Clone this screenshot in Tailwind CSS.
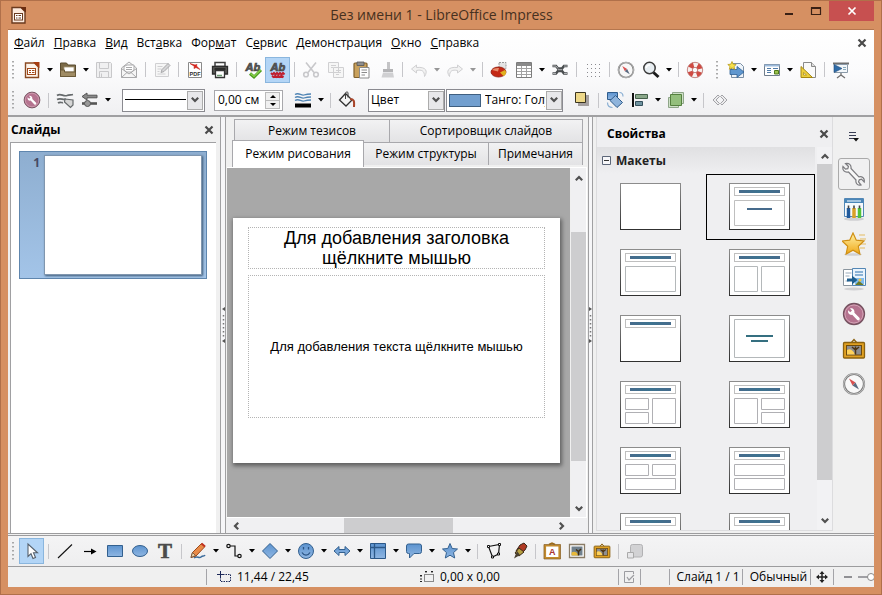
<!DOCTYPE html>
<html lang="ru">
<head>
<meta charset="utf-8">
<title>Без имени 1 - LibreOffice Impress</title>
<script src="https://cdn.jsdelivr.net/npm/@tailwindcss/browser@4"></script>
</head>
<body class="flex h-screen flex-col overflow-hidden border border-[#b0704a] bg-[#d69062] px-[7px] pb-[7px] font-['Open_Sans','Noto_Sans',sans-serif] text-[12px] leading-4 text-black">

<svg class="absolute size-0" aria-hidden="true">
  <defs>
    <linearGradient id="blue" x1="0" y1="0" x2="0" y2="1"><stop offset="0" stop-color="#5c93cf"/><stop offset="1" stop-color="#8fb6e2"/></linearGradient>
    <linearGradient id="gold" x1="0" y1="0" x2="0" y2="1"><stop offset="0" stop-color="#fff2a8"/><stop offset="1" stop-color="#f0a818"/></linearGradient>
    <linearGradient id="edge" x1="0" y1="0" x2="0" y2="1"><stop offset="0" stop-color="#8c8c8c"/><stop offset="1" stop-color="#303030"/></linearGradient>
    <linearGradient id="bar" x1="0" y1="0" x2="1" y2="0"><stop offset="0" stop-color="#466b8c"/><stop offset=".5" stop-color="#3d7390"/><stop offset="1" stop-color="#466b8c"/></linearGradient>
    <symbol id="x" viewBox="0 0 10 10"><path d="M1.500 1.500l7 7M8.500 1.500l-7 7" stroke="#4a4a4a" stroke-width="2.200"/></symbol>
    <symbol id="chev" viewBox="0 0 10 10"><path d="M1.800 2.800L5 6l3.200-3.200" fill="none" stroke="#505050" stroke-width="2.200"/></symbol>
    <symbol id="dd" viewBox="0 0 11 24"><path d="M3 10h6L6 13.500z"/></symbol>
    <symbol id="grip" viewBox="0 0 11 24"><path d="M5 3v19" stroke="#909090" stroke-width="1.500" stroke-dasharray="1.500 2.500"/></symbol>
    <symbol id="wrenchball" viewBox="0 0 24 24"><circle cx="12" cy="12" r="10.500" fill="#b5738f" stroke="#74515f" stroke-width="1.300"/><circle cx="12" cy="12" r="9" fill="none" stroke="#d3a3b5" stroke-width="1"/><path d="M8 6.500l2 2-1.800 1.800-2-2c-.7 3 1.300 5 4 4.500l5 5.200c1.500 1.300 3.500-.6 2.200-2.200l-5-5c.6-3-1.800-5-4.400-4.300z" fill="#fff"/></symbol>
    <symbol id="compass" viewBox="0 0 24 24"><circle cx="12" cy="12" r="10" fill="#f8f8f8" stroke="#7c7c7c" stroke-width="2.200"/><circle cx="12" cy="12" r="10.300" fill="none" stroke="#d5d5d5" stroke-width=".8"/><path d="M7 6.500l6.500 4-3 3z" fill="#d85050"/><path d="M17 17.500l-6.500-4 3-3z" fill="#5a6a80"/></symbol>
    <symbol id="gallery" viewBox="0 0 24 24"><path d="M9 6l3-3.500L15 6" fill="none" stroke="#8b6210" stroke-width="1.300"/><rect x="1.500" y="5.500" width="21" height="15.500" rx="1" fill="#e0a021" stroke="#8b6210" stroke-width="1.300"/><rect x="4.500" y="8.500" width="15" height="9.500" fill="#8e8e90" stroke="#6e4b0c"/><path d="M5 17.500v-4.500c3-2 6 0 8 4.500z" fill="#ffd25a"/><path d="M13.500 17.500v-4.500l-3.500-3M13.500 13l3.500-3M13.500 12V9.500" stroke="#4f3512" stroke-width="1.500" fill="none"/></symbol>
    <symbol id="frame" viewBox="0 0 61 47"><rect x=".5" y=".5" width="60" height="46" fill="#fff" stroke="url(#edge)"/></symbol>
    <symbol id="titled" viewBox="0 0 61 47"><rect x=".5" y=".5" width="60" height="46" fill="#fff" stroke="url(#edge)"/><rect x="5.500" y="4.500" width="50" height="8" fill="#fff" stroke="#bfbfbf"/><rect x="10" y="7" width="41" height="3" fill="url(#bar)"/></symbol>
  </defs>
</svg>

<header class="flex h-7 shrink-0 items-start">
  <svg class="mt-[5px] ml-[2px] size-[18px]" viewBox="0 0 18 18"><path d="M2 1.500h9l4 4v11.500H2z" fill="#fbe9dc" stroke="#6b3a1e" stroke-width="1.400"/><path d="M10 1l6 0v5.500z" fill="#6b2d10"/><rect x="4.500" y="7.500" width="8" height="6.500" fill="#fff" stroke="#6b3a1e"/><path d="M6 9.500h1.500M8.500 9.500H11M6 12h1.500M8.500 12H11" stroke="#6b3a1e"/></svg>
  <h1 class="flex-1 pt-1 pl-[80px] text-center text-[14px] leading-5 text-[#47301f]">Без имени 1 - LibreOffice Impress</h1>
  <button aria-label="Свернуть" class="grid h-5 w-[27px] place-items-center"><svg class="size-3" viewBox="0 0 12 12"><path d="M2 9h8" stroke="#3a2014" stroke-width="2"/></svg></button>
  <button aria-label="Развернуть" class="grid h-5 w-[27px] place-items-center"><svg class="size-3" viewBox="0 0 12 12"><path d="M1.500 3h9v6.500h-9z" fill="none" stroke="#3a2014" stroke-width="1.200"/><path d="M1 3h10" stroke="#3a2014" stroke-width="2"/></svg></button>
  <button aria-label="Закрыть" class="grid h-5 w-[45px] place-items-center bg-[#c75050]"><svg class="size-[10px]" viewBox="0 0 10 10"><path d="M1.500 1.500l7 7M8.500 1.500l-7 7" stroke="#fff" stroke-width="1.700"/></svg></button>
</header>

<div class="flex min-h-0 flex-1 flex-col border-t border-[#b5764e] bg-[#f0f0f0]">
  <div class="shrink-0 border-b-2 border-[#a0a0a2] bg-linear-to-b from-white via-[#fbfbfc] to-[#f0f0f2]">
    <nav class="flex h-6 items-center gap-[9px] pt-px pl-[6px]">
      <a href="#"><u>Ф</u>айл</a><a href="#"><u>П</u>равка</a><a href="#"><u>В</u>ид</a><a href="#">Вст<u>а</u>вка</a><a href="#">Фор<u>м</u>ат</a><a href="#">С<u>е</u>рвис</a><a href="#"><u>Д</u>емонстрация</a><a href="#"><u>О</u>кно</a><a href="#"><u>С</u>правка</a>
      <button aria-label="Закрыть документ" class="mr-[7px] ml-auto"><svg class="size-[10px]"><use href="#x"/></svg></button>
    </nav>

    <div role="toolbar" aria-label="Стандартная" class="flex h-[31px] items-center [&>*]:shrink-0 [&>.dd]:w-[11px] [&>.grip]:w-[11px] [&>button]:grid [&>button]:h-[26px] [&>button]:w-[25px] [&>button]:place-items-center [&>hr]:mr-[3px] [&>hr]:ml-1 [&>hr]:h-[15px] [&>hr]:w-px [&>hr]:border-0 [&>hr]:bg-[#c6c6ca] [&_svg]:h-6 [&>button:not(.dd)>svg]:w-6">
      <svg class="grip"><use href="#grip"/></svg>
      <button aria-label="Создать"><svg viewBox="0 0 24 24"><path d="M5.500 5h9l4 4v10.500h-13z" fill="#fdf3ea" stroke="#8a4a22" stroke-width="1.400"/><path d="M13 4h6.500v6z" fill="#a83c10"/><rect x="7.500" y="10.500" width="8" height="6" fill="#fff" stroke="#a34a1a"/><path d="M9 12.500h2M12 12.500h2.500M9 14.500h2M12 14.500h2.500" stroke="#a34a1a"/></svg></button>
      <button class="dd" aria-label="Создать: варианты"><svg class="w-[11px]"><use href="#dd"/></svg></button>
      <button aria-label="Открыть"><svg viewBox="0 0 24 24"><path d="M4.500 5h6l1.500 2h7.500v11.500h-15z" fill="#7b6a48" stroke="#5a4c30"/><rect x="8" y="9" width="10" height="5" fill="#fff" stroke="#a59878" stroke-width=".8"/><path d="M4.500 12h4v2h11v4.500h-15z" fill="#a08c64" stroke="#6b5a38"/></svg></button>
      <button class="dd" aria-label="Открыть: варианты"><svg class="w-[11px]"><use href="#dd"/></svg></button>
      <button aria-label="Сохранить"><svg viewBox="0 0 24 24" fill="none" stroke="#c8c8ca"><path d="M4.500 4.500h14l1 1v14h-15z" fill="#f0f0f1"/><path d="M7.500 4.500v6h9v-6M7.500 19v-5.500h9V19M9.500 15.500v3.500"/></svg></button>
      <button aria-label="Отправить"><svg viewBox="0 0 24 24" fill="#f6f6f6" stroke="#a9a9ab"><path d="M4.500 10L12 4l7.500 6v9.500h-15z"/><path d="M7 12V8.500L10 7h7v5l-5 4z" fill="#fff"/><path d="M4.500 19.500l6-5.500h3l6 5.500M4.500 10.500l6 4.500M19.500 10.500l-6 4.500M9 9.500h6M9 11.500h6" fill="none"/></svg></button>
      <hr>
      <button aria-label="Правка"><svg viewBox="0 0 24 24" fill="none" stroke="#d0d0d2"><path d="M5.500 5.500h13v13h-13z" fill="#f6f6f6"/><path d="M7.500 8.500h5M7.500 11h4M7.500 13.500h2M7.500 16h8"/><path d="M11 14.500l1-3 6-6 2 2-6 6z" fill="#d5d5d7" stroke="#a8a8aa"/></svg></button>
      <hr>
      <button aria-label="Экспорт в PDF"><svg viewBox="0 0 24 24"><path d="M5.500 4.500h13v15h-13z" fill="#fff" stroke="#8a8a8a"/><path d="M7 5.500l5 1.500 2-.5-.5 1.500 3.500 3.500-4-2-2 1 .3-2.200z" fill="#e02018" stroke="#c02018" stroke-width=".6"/><text x="12" y="18" text-anchor="middle" font-family="Liberation Sans" font-size="5.500" font-weight="700" fill="#303030">PDF</text></svg></button>
      <button aria-label="Печать"><svg viewBox="0 0 24 24"><path d="M7 4.500h10v4H7z" fill="#fff" stroke="#404040" stroke-width="1.500"/><path d="M4.500 8.500h15V16h-15z" fill="#5b5b58" stroke="#2d2d2d" stroke-width="1.300"/><path d="M6.500 11h11" stroke="#1c1c1c" stroke-width="1.500"/><path d="M7.500 12.500h9v7h-9z" fill="#fff" stroke="#333" stroke-width="1.300"/><path d="M9 17.500h5" stroke="#6a9a70" stroke-width="1.500"/></svg></button>
      <hr>
      <button aria-label="Орфография"><svg viewBox="0 0 24 24"><text x="4.500" y="12.500" font-family="Liberation Sans" font-size="11" font-weight="700" font-style="italic" fill="#606060" stroke="#404040" stroke-width=".7">Ab</text><path d="M9 15.500l4 3.500L20 12" fill="none" stroke="#4b9a1e" stroke-width="3"/><path d="M9.500 15.500l3.500 3 6.500-6.500" fill="none" stroke="#8ad24c" stroke-width="1.200"/></svg></button>
      <button aria-label="Автопроверка орфографии" aria-pressed="true" class="border border-[#8ab6de] bg-[#b3d5f6]"><svg viewBox="0 0 24 24"><text x="4.500" y="12.500" font-family="Liberation Sans" font-size="11" font-weight="700" font-style="italic" fill="#606060" stroke="#404040" stroke-width=".7">Ab</text><path d="M5 15l1.500 1.500L8 15l1.500 1.500L11 15l1.500 1.500L14 15l1.500 1.500L17 15l1.500 1.500M6 18l1.500 1L9 18l1.500 1L12 18l1.500 1L15 18l1.500 1 1-1" fill="none" stroke="#c02030" stroke-width="2"/></svg></button>
      <hr>
      <button aria-label="Вырезать"><svg viewBox="0 0 24 24" fill="none" stroke="#c8c8cb" stroke-width="1.600"><path d="M7 4.500l8 10M17 4.500l-8 10"/><circle cx="7" cy="16.500" r="2.300"/><circle cx="17" cy="16.500" r="2.300"/></svg></button>
      <button aria-label="Копировать"><svg viewBox="0 0 24 24" fill="#f6f6f6" stroke="#d0d0d2"><path d="M4.500 4.500h10v10h-10zM9.500 9.500h10v10h-10z"/><path d="M7 7.500h5M7 9.500h2M12 12.500h5M12 14.500h5M12 16.500h3"/></svg></button>
      <button aria-label="Вставить"><svg viewBox="0 0 24 24"><rect x="5" y="5" width="13" height="14.500" rx="1" fill="#c9a15c" stroke="#80602c" stroke-width="1.200"/><path d="M8 4h7v3.500H8z" fill="#8e8e8e" stroke="#555" stroke-width=".8"/><path d="M10.500 9.500h9.500v10.500h-9.500z" fill="#fdfdfd" stroke="#8a8a8a"/><path d="M12.500 12h5.500M12.500 14.500h5.500M12.500 17h3.500" stroke="#8a8a8a"/></svg></button>
      <button aria-label="Копировать формат"><svg viewBox="0 0 24 24"><path d="M13 4h3v7h-3z" fill="#c4c4c6"/><path d="M9 11h10v3H9z" fill="#b4b4b6"/><path d="M9 14.500h10l1 5H7.500z" fill="#d0d0d2"/></svg></button>
      <hr>
      <button aria-label="Отменить"><svg viewBox="0 0 24 24"><path d="M9.500 7l-5 4 5 4v-2.500c5-1 8 0 8 6 3.500-5 2-10-8-9z" fill="#f2f2f2" stroke="#d0d0d2"/></svg></button>
      <button class="dd opacity-40" aria-label="Отменить: список"><svg class="w-[11px]"><use href="#dd"/></svg></button>
      <button aria-label="Вернуть"><svg viewBox="0 0 24 24"><path d="M14.500 7l5 4-5 4v-2.500c-5-1-8 0-8 6-3.500-5-2-10 8-9z" fill="#f2f2f2" stroke="#d0d0d2"/></svg></button>
      <button class="dd opacity-40" aria-label="Вернуть: список"><svg class="w-[11px]"><use href="#dd"/></svg></button>
      <hr>
      <button aria-label="Диаграмма"><svg viewBox="0 0 24 24"><path d="M12 4.500h7v6l-2 1.500-5-2z" fill="#e4e4e4" stroke="#9a9a9a" stroke-dasharray="2 1"/><ellipse cx="11.500" cy="14" rx="7.500" ry="5" fill="#c42814" stroke="#8c1a0c" stroke-width=".8"/><path d="M5 12a7 4 0 0 1 7-2l-1 3.500z" fill="#e88a6a"/><path d="M13 14.500l5-2.500c2 2 1 5-1.500 6z" fill="#e0b020"/></svg></button>
      <button aria-label="Таблица"><svg viewBox="0 0 24 24"><path d="M4.500 4.500h15v15h-15z" fill="#fff" stroke="#7c7c7c"/><path d="M5 5h14v3H5z" fill="#8a8a8a"/><path d="M5 10.500h14M5 13.500h14M5 16.500h14M9.500 8v11M14.500 8v11" stroke="#a2a2a2"/></svg></button>
      <button class="dd" aria-label="Таблица: размер"><svg class="w-[11px]"><use href="#dd"/></svg></button>
      <button aria-label="Гиперссылка"><svg viewBox="0 0 24 24" fill="none"><path d="M4.500 8H8l2 2.500h4L16 8h3.500M4.500 15.500H8l2-2.500h4l2 2.500h3.500" stroke="#4a4e50" stroke-width="2.600"/><path d="M5 8h3l2 2.500M16 8h3M10 11.700h4M5 15.500h3M16 15.500h3" stroke="#b0b2b4"/></svg></button>
      <hr>
      <button aria-label="Сетка"><svg viewBox="0 0 24 24"><path d="M6 6.500h14M6 10.500h14M6 14.500h14M6 18.500h14" stroke="#8b8b90" stroke-dasharray="1 3"/></svg></button>
      <hr>
      <button aria-label="Навигатор"><svg class="p-[3px]"><use href="#compass"/></svg></button>
      <button aria-label="Масштаб"><svg viewBox="0 0 24 24"><circle cx="10.500" cy="10" r="5.700" fill="#e8eef2" stroke="#3c3c3c" stroke-width="1.500"/><path d="M7 10a4 4 0 0 1 4-3" stroke="#fff" fill="none" stroke-width="1.500"/><path d="M14.500 14.500l5 4.500" stroke="#1c1c1c" stroke-width="3"/></svg></button>
      <button class="dd" aria-label="Масштаб: варианты"><svg class="w-[11px]"><use href="#dd"/></svg></button>
      <hr>
      <button aria-label="Справка"><svg viewBox="0 0 24 24"><circle cx="12" cy="12" r="5.200" fill="none" stroke="#f6f1f0" stroke-width="5"/><circle cx="12" cy="12" r="5.200" fill="none" stroke="#d04a42" stroke-width="5" stroke-dasharray="4.080 4.090" stroke-dashoffset="-2"/><circle cx="12" cy="12" r="7.700" fill="none" stroke="#b86a66" stroke-width=".8"/><circle cx="12" cy="12" r="2.700" fill="none" stroke="#b86a66" stroke-width=".8"/></svg></button>
      <svg class="w-4" viewBox="0 0 16 24"><path d="M10 3v19" stroke="#909090" stroke-width="1.500" stroke-dasharray="1.500 2.500"/></svg>
      <button aria-label="Создать слайд"><svg viewBox="0 0 24 24"><path d="M7.500 5.500h9l3 3v11h-12z" fill="#eef4fa" stroke="#7b8fa4"/><path d="M6 11.500h7V8.500l7 5.500-7 5.500v-3H6z" fill="#5f97cf" stroke="#2f5f93" stroke-width=".8"/><path d="M8 3.500l1.200 2.700 3 .3-2.200 2 .7 2.800L8 9.900l-2.700 1.400.7-2.800-2.200-2 3-.3z" fill="#f7e14a" stroke="#b79a1a" stroke-width=".8"/></svg></button>
      <button class="dd" aria-label="Создать слайд: варианты"><svg class="w-[11px]"><use href="#dd"/></svg></button>
      <button aria-label="Разметка слайда"><svg viewBox="0 0 24 24"><path d="M4.500 6.500h15v11h-15z" fill="#fff" stroke="#6f7d8b"/><path d="M4.500 6.500h15v2h-15z" fill="#9cbbdc"/><path d="M7 10.500h4M7 12.500h4M7 14.500h4M13 10.500h5" stroke="#4f7ba8"/><path d="M14.500 12.500h4v3.500h-4z" fill="#9cc24e" stroke="#4e7a1a"/></svg></button>
      <button class="dd" aria-label="Разметка слайда: варианты"><svg class="w-[11px]"><use href="#dd"/></svg></button>
      <button aria-label="Дизайн слайда"><svg viewBox="0 0 24 24"><path d="M7.500 4.500h8l4 4v11h-12z" fill="#fafafa" stroke="#8a8a8a"/><path d="M15.500 4.500v4h4" fill="#ddd" stroke="#8a8a8a"/><path d="M5 8.500v11h11.500z" fill="#edcf3c" stroke="#a58712"/><path d="M7.500 14.500v2.500h3z" fill="#fff" stroke="#a58712" stroke-width=".7"/></svg></button>
      <hr>
      <button aria-label="Демонстрация"><svg viewBox="0 0 24 24"><path d="M4 5.500h16" stroke="#6e6e6e" stroke-width="2"/><path d="M5.500 6.500h13v8h-13z" fill="#f3f7fa" stroke="#8a9aa8"/><path d="M5 6.500l8 4-8 4z" fill="#2f6ca8" stroke="#1f4a7a" stroke-width=".6"/><path d="M14 9.500h3M14 11.500h3" stroke="#8ab"/><path d="M12 15v2l-4 3M12 17l4 3" stroke="#707070" fill="none" stroke-width="1.300"/></svg></button>
    </div>

    <div role="toolbar" aria-label="Линия и заливка" class="flex h-[30px] items-center [&>*]:shrink-0 [&>.dd]:w-[11px] [&>.grip]:w-[11px] [&>button]:grid [&>button]:h-[26px] [&>button]:w-[25px] [&>button]:place-items-center [&>hr]:mr-[3px] [&>hr]:ml-1 [&>hr]:h-[15px] [&>hr]:w-px [&>hr]:border-0 [&>hr]:bg-[#c6c6ca] [&>.grip]:h-6 [&>button>svg]:h-6 [&>button:not(.dd)>svg]:w-6">
      <svg class="grip"><use href="#grip"/></svg>
      <button aria-label="Стили"><svg class="p-[3px]"><use href="#wrenchball"/></svg></button>
      <hr>
      <button aria-label="Линия"><svg viewBox="0 0 24 24" fill="none" stroke="#666a6c" stroke-width="1.700"><path d="M4 7.500c4-3 6 1.500 10 0 2-1 4-.5 6-1M4 11.500c4-2 6 1 9-.5M5 15c2-1.500 4 0 5-.5"/><path d="M12 11l8 1v5l-2.500 2.500-6-5.500z" fill="#d6d6d6" stroke-width="1.200"/></svg></button>
      <button aria-label="Стрелки"><svg viewBox="0 0 24 24"><path d="M4 8.500L9 5v2.200h10v2.600H9V12z" fill="#8a8a8a" stroke="#555"/><path d="M4 15.500h15" stroke="#555" stroke-width="2.600"/><circle cx="9.500" cy="15.500" r="3" fill="#999" stroke="#555"/></svg></button>
      <button class="dd" aria-label="Стрелки: варианты"><svg class="w-[11px]"><use href="#dd"/></svg></button>
      <div class="relative ml-[9px] h-[23px] w-[83px]">
        <select aria-label="Стиль линии" class="size-full appearance-none border border-[#8a8a90] bg-white"><option label=" " value="1"></option></select>
        <span class="pointer-events-none absolute top-[10px] left-[3px] h-px w-[61px] bg-black"></span>
        <span class="pointer-events-none absolute inset-y-[2px] right-[2px] grid w-4 place-items-center border border-[#acacac] bg-[#e8e8ea]"><svg class="size-[10px]"><use href="#chev"/></svg></span>
      </div>
      <div class="ml-[9px] flex h-[21px] w-[69px] items-center border border-[#a8a8ac] bg-white">
        <input aria-label="Толщина линии" value="0,00 см" class="w-[50px] pl-[3px] outline-none">
        <div class="flex h-[17px] w-[15px] flex-col">
          <button aria-label="Больше" class="grid flex-1 place-items-center border border-[#bbb] bg-[#f0f0f0]"><svg class="h-[3px] w-[6px]" viewBox="0 0 6 3"><path d="M0 3h6L3 0z"/></svg></button>
          <button aria-label="Меньше" class="grid flex-1 place-items-center border border-t-0 border-[#bbb] bg-[#f0f0f0]"><svg class="h-[3px] w-[6px]" viewBox="0 0 6 3"><path d="M0 0h6L3 3z"/></svg></button>
        </div>
      </div>
      <button aria-label="Цвет линии" class="ml-[7px]"><svg viewBox="0 0 24 24"><path d="M4 6.500c4-2.500 6 1.500 9 .5s4-1 7-1M4 9.500c4-2.500 6 1.500 9 .5s4-1 7-1M4 12.500c4-2.500 6 1.500 9 .5s4-1 7-1" fill="none" stroke="#4f84b4" stroke-width="1.300"/><path d="M4 15.500h16v4H4z"/></svg></button>
      <button class="dd" aria-label="Цвет линии: палитра"><svg class="w-[11px]"><use href="#dd"/></svg></button>
      <hr>
      <button aria-label="Область"><svg viewBox="0 0 24 24"><path d="M10.500 5.500l6.500 6.500-6 6-6.500-6z" fill="#f4f4f4" stroke="#303030" stroke-width="1.300"/><path d="M10.500 11V5a1.500 1.500 0 0 1 2.500-.5v5" fill="none" stroke="#404040"/><path d="M15 11c4 0 4.500 2 4 8" fill="none" stroke="#a8452a" stroke-width="2"/></svg></button>
      <div class="relative ml-[9px] h-[23px] w-[77px]">
        <select aria-label="Тип заливки" class="size-full appearance-none border border-[#8a8a90] bg-white pr-5 pl-[2px] leading-4"><option>Цвет</option></select>
        <span class="pointer-events-none absolute inset-y-[2px] right-[1px] grid w-4 place-items-center border border-[#acacac] bg-[#e8e8ea]"><svg class="size-[10px]"><use href="#chev"/></svg></span>
      </div>
      <div class="relative ml-px h-[23px] w-[117px]">
        <select aria-label="Цвет заливки" class="size-full appearance-none border border-[#8a8a90] bg-white pr-[17px] pl-[38px] leading-4"><option>Танго: Голубое небо</option></select>
        <span class="pointer-events-none absolute top-[5px] left-[3px] h-[13px] w-8 border border-[#3f5f80] bg-[#729fcf]"></span>
        <span class="pointer-events-none absolute inset-y-[2px] right-[1px] grid w-4 place-items-center border border-[#acacac] bg-[#e8e8ea]"><svg class="size-[10px]"><use href="#chev"/></svg></span>
      </div>
      <button aria-label="Тень" class="ml-[6px]"><svg viewBox="0 0 24 24"><path d="M8 7h11v11H8z" fill="#a5a0a0"/><path d="M5.500 4.500h10v10h-10z" fill="#eed888" stroke="#3a3420"/></svg></button>
      <hr>
      <button aria-label="Повернуть"><svg viewBox="0 0 24 24"><path d="M4.500 4.500h10v7h-10z" fill="url(#blue)" stroke="#2f5c8c"/><path d="M12.500 7.500l7 7-5.500 5-7-7z" fill="#8fb4dc" stroke="#2f5c8c"/><path d="M16.500 4.500c3 0 3.500 2 3.500 4M4.500 14.500c0 3 2 5 5 5" fill="none" stroke="#8bb0d4" stroke-width="1.200"/></svg></button>
      <button aria-label="Выровнять"><svg viewBox="0 0 24 24"><path d="M5 5v14" stroke="#111" stroke-width="2"/><path d="M7.500 6.500h12v4h-12z" fill="#8aa78a" stroke="#44604a"/><path d="M7.500 13.500h7v4h-7z" fill="#6f93a0" stroke="#34505c"/></svg></button>
      <button class="dd" aria-label="Выровнять: варианты"><svg class="w-[11px]"><use href="#dd"/></svg></button>
      <button aria-label="Расположить"><svg viewBox="0 0 24 24"><path d="M8.500 4.500h11v11h-11zM4.500 9.500h10v10h-10z" fill="#cfe0c8" stroke="#8ea588"/><path d="M6.500 6.500h11v11h-11z" fill="#93bf7c" stroke="#55803f"/></svg></button>
      <button class="dd" aria-label="Расположить: варианты"><svg class="w-[11px]"><use href="#dd"/></svg></button>
      <hr>
      <button aria-label="Эффекты"><svg viewBox="0 0 24 24" fill="#ececee" stroke="#a2a2a6"><path d="M5 12l5-5 1.500 1.500L8 12l3.500 3.500L10 17zM19 12l-5-5-1.500 1.500L16 12l-3.500 3.500L14 17z"/></svg></button>
    </div>
  </div>

  <main class="flex min-h-0 flex-1 border-b border-[#9c9c9e]">
    <aside class="flex w-[212px] shrink-0 flex-col pr-1 pl-[2px]">
      <div class="flex h-[25px] items-center pl-px">
        <h2 class="flex-1 text-[12px] font-bold">Слайды</h2>
        <button aria-label="Закрыть панель слайдов" class="mr-[1px] p-px"><svg class="size-[10px]"><use href="#x"/></svg></button>
      </div>
      <div class="min-h-0 flex-1 border-t border-l border-[#a0a0a2] bg-white pt-2 pl-2">
        <button aria-label="Слайд 1" class="flex h-32 w-[188px] border border-[#5f86ae] bg-linear-to-b from-[#8eaed0] to-[#a3c4e8] py-[3px] pr-1">
          <span class="w-6 pr-1 text-right text-[12px] font-bold text-[#454a63]">1</span>
          <span class="flex-1 self-stretch border border-[#8096ae] bg-white shadow-[1px_1px_2px_#3d5a78]"></span>
        </button>
      </div>
    </aside>
    <div class="grid w-[6px] shrink-0 place-items-center border-x border-[#a0a0a2] bg-[#f6f6f8]"><svg class="h-9 w-1" viewBox="0 0 4 36"><path d="M4 0v4L1 2zM4 32v4L1 34z" fill="#555"/><path d="M2.500 8v22" stroke="#777" stroke-width="1.500" stroke-dasharray="1.500 2.500"/></svg></div>

    <section class="flex min-w-0 flex-1 flex-col pr-px pl-px">
      <div role="tablist" class="pt-[2px] pr-1 pl-[5px]">
        <div class="ml-[2px] flex h-[23px] border-t border-r border-[#a8a8ac] bg-linear-to-b from-[#f2f2f3] to-[#e3e3e5]">
          <button role="tab" class="w-[155px] border-l border-[#a8a8ac]">Режим тезисов</button>
          <button role="tab" class="flex-1 border-l border-[#a8a8ac]">Сортировщик слайдов</button>
        </div>
        <div class="flex h-[25px] items-start">
          <button role="tab" aria-selected="true" class="relative -mt-[2px] h-[27px] w-[132px] border border-b-0 border-[#a8a8ac] bg-white">Режим рисования</button>
          <button role="tab" class="h-[23px] w-[124px] border-t border-[#a8a8ac] bg-linear-to-b from-[#f2f2f3] to-[#e3e3e5]">Режим структуры</button>
          <button role="tab" class="h-[23px] flex-1 border-x border-t border-[#a8a8ac] bg-linear-to-b from-[#f2f2f3] to-[#e3e3e5]">Примечания</button>
        </div>
      </div>
      <div class="flex min-h-0 flex-1 border-t border-white">
        <div class="flex min-w-0 flex-1 items-center overflow-hidden bg-[#a8a8a8] pr-[10px] pb-1 pl-[6px]">
          <div class="flex aspect-[4/3] w-full flex-col gap-[6px] bg-white px-[15px] pt-[9px] pb-[45px] font-['Liberation_Sans',Arial,sans-serif] shadow-[1px_2px_4px_1px_#606060]">
            <div class="border border-dotted border-[#b4b4b4] text-center text-[18px] leading-5">Для добавления заголовка щёлкните мышью</div>
            <div class="grid flex-1 place-items-center border border-dotted border-[#b4b4b4] text-[13px]">Для добавления текста щёлкните мышью</div>
          </div>
        </div>
        <div class="ml-px flex w-4 flex-col items-center border-r border-white bg-[#f0f0f2]">
          <button aria-label="Вверх" class="grid h-5 w-full place-items-center"><svg class="size-[10px] rotate-180"><use href="#chev"/></svg></button>
          <div class="flex w-full flex-1 flex-col pt-11 pb-10"><div class="flex-1 bg-[#cdcdcf]"></div></div>
          <button aria-label="Вниз" class="grid h-4 w-full place-items-center"><svg class="size-[10px]"><use href="#chev"/></svg></button>
        </div>
      </div>
      <div class="flex h-4 items-center border-t border-white bg-[#f0f0f2] pr-[17px]">
        <button aria-label="Влево" class="grid w-[17px] place-items-center"><svg class="size-[10px] rotate-90"><use href="#chev"/></svg></button>
        <div class="flex h-full flex-1 pr-[100px] pl-[100px]"><div class="flex-1 bg-[#cdcdcf]"></div></div>
        <button aria-label="Вправо" class="grid w-[17px] place-items-center"><svg class="size-[10px] -rotate-90"><use href="#chev"/></svg></button>
      </div>
    </section>

    <div class="grid w-[5px] shrink-0 place-items-center border-x border-[#a0a0a2] bg-[#f6f6f8]"><svg class="h-9 w-1" viewBox="0 0 4 36"><path d="M0 0v4l3-2zM0 32v4l3-2z" fill="#555"/><path d="M1.500 8v22" stroke="#777" stroke-width="1.500" stroke-dasharray="1.500 2.500"/></svg></div>

    <aside class="flex w-[281px] shrink-0 pb-[2px] pl-[3px]">
      <div class="flex min-w-0 flex-1 flex-col border-r border-b border-l border-[#dcdcde] bg-[#efeff1]">
        <div class="flex h-[30px] items-center pt-1 pl-[10px]">
          <h2 class="flex-1 text-[12px] font-bold">Свойства</h2>
          <button aria-label="Закрыть боковую панель" class="mr-[3px]"><svg class="size-[10px]"><use href="#x"/></svg></button>
        </div>
        <div class="flex min-h-0 flex-1">
          <div class="flex min-w-0 flex-1 flex-col">
            <button aria-expanded="true" class="flex h-[27px] shrink-0 items-center gap-[5px] bg-linear-to-b from-[#e0e0e2] to-[#efeff1] pl-[5px] font-bold text-[#222]"><svg class="size-[9px]" viewBox="0 0 9 9"><path d="M.5.5h8v8h-8z" fill="#f7f7f9" stroke="#5c6678"/><path d="M2 4.500h5" stroke="#333"/></svg>Макеты</button>
            <div class="grid min-h-0 flex-1 auto-rows-[66px] grid-cols-2 overflow-hidden [&_svg]:h-[47px] [&_svg]:w-[61px] [&>button]:grid [&>button]:place-items-center [&>button]:pr-[2px] [&>button]:pb-px">
              <button aria-label="Пустой слайд"><svg><use href="#frame"/></svg></button>
              <button aria-label="Титульный слайд" aria-pressed="true" class="border border-black"><svg viewBox="0 0 61 47"><use href="#titled"/><path d="M5.500 17.500h50v25h-50z" fill="none" stroke="#bfbfbf"/><path d="M18 26h25" stroke="#466b8c" stroke-width="2"/></svg></button>
              <button aria-label="Заголовок, текст"><svg viewBox="0 0 61 47"><use href="#titled"/><path d="M5.500 17.500h50v25h-50z" fill="none" stroke="#b4b8ba"/></svg></button>
              <button aria-label="Заголовок, два блока"><svg viewBox="0 0 61 47"><use href="#titled"/><path d="M5.500 17.500h23v25h-23zM32.500 17.500h23v25h-23z" fill="none" stroke="#b4b8ba"/></svg></button>
              <button aria-label="Только заголовок"><svg><use href="#titled"/></svg></button>
              <button aria-label="Текст по центру"><svg viewBox="0 0 61 47"><use href="#frame"/><path d="M5.500 4.500h50v38h-50z" fill="none" stroke="#b4b8ba"/><path d="M17 21h27M22 26h17" stroke="#356f80" stroke-width="2"/></svg></button>
              <button aria-label="Заголовок, два блока слева"><svg viewBox="0 0 61 47"><use href="#titled"/><path d="M5.500 17.500h23v11h-23zM5.500 31.500h23v11h-23zM32.500 17.500h23v25h-23z" fill="none" stroke="#b0b0b4"/></svg></button>
              <button aria-label="Заголовок, два блока справа"><svg viewBox="0 0 61 47"><use href="#titled"/><path d="M5.500 17.500h23v25h-23zM32.500 17.500h23v11h-23zM32.500 31.500h23v11h-23z" fill="none" stroke="#b0b0b4"/></svg></button>
              <button aria-label="Заголовок, два блока сверху"><svg viewBox="0 0 61 47"><use href="#titled"/><path d="M5.500 17.500h23v11h-23zM32.500 17.500h23v11h-23zM5.500 31.500h50v11h-50z" fill="none" stroke="#b0b0b4"/></svg></button>
              <button aria-label="Заголовок, блок над блоком"><svg viewBox="0 0 61 47"><use href="#titled"/><path d="M5.500 17.500h50v11h-50zM5.500 31.500h50v11h-50z" fill="none" stroke="#b0b0b4"/></svg></button>
              <button aria-label="Заголовок, четыре блока"><svg><use href="#titled"/></svg></button>
              <button aria-label="Заголовок, шесть блоков"><svg><use href="#titled"/></svg></button>
            </div>
          </div>
          <div class="ml-[2px] flex w-[15px] flex-col bg-[#f2f2f4]">
            <button aria-label="Прокрутить вверх" class="grid h-[17px] place-items-center"><svg class="size-[10px] rotate-180"><use href="#chev"/></svg></button>
            <div class="flex flex-1 flex-col pb-8"><div class="flex-1 bg-[#cdcdcf]"></div></div>
            <button aria-label="Прокрутить вниз" class="grid h-[18px] place-items-center"><svg class="size-[10px]"><use href="#chev"/></svg></button>
          </div>
        </div>
      </div>
      <div class="flex w-[41px] shrink-0 flex-col items-center gap-[3px] pt-[3px] [&>button]:grid [&>button]:h-8 [&>button]:w-8 [&>button]:place-items-center [&_svg]:size-6">
        <button aria-label="Настройки панели" class="mb-[3px]"><svg viewBox="0 0 24 24"><path d="M7 8.500h7M7 11.500h7M7 14.500h5" stroke="#3a3f55" stroke-width="1.200"/><path d="M11 14h6l-3 3.500z" fill="#111"/></svg></button>
        <button aria-label="Свойства" aria-pressed="true" class="rounded-[3px] border border-[#aaa] bg-[#f0f0f1]"><svg viewBox="0 0 24 24"><path d="M3.500 1.500l3 3-.7 2.200-2.300.5-2.500-2.700c-.8 3.500 1.500 6.500 5.500 5.500l7.500 8c-.8 3.500 2 5.800 5 5l-2.500-3 .8-2.200 2.200-.6 2.700 2.800c.8-3.500-2-6-5.300-5.200L9 6.500C9.500 3 7 .8 3.500 1.500z" fill="#f8f8f8" stroke="#7c7c80" stroke-width="1.200"/></svg></button>
        <button aria-label="Мастер-страницы"><svg viewBox="0 0 24 24"><ellipse cx="12" cy="22" rx="10" ry="1.800" fill="#d0d0d2"/><path d="M2.500 1.500h19v18h-19z" fill="#f5f9fc" stroke="#5387b5"/><path d="M2.500 2h19v4h-19z" fill="#4a86b8"/><path d="M5 4h14" stroke="#e2eef8" stroke-width="1.200"/><path d="M6.500 11v10" stroke="#205a9c" stroke-width="3.500"/><path d="M12 11v10" stroke="#d9a026" stroke-width="3.500"/><path d="M17.500 11v10" stroke="#52c238" stroke-width="3.500"/><path d="M6.500 8.500v3M12 8.500v3M17.500 8.500v3" stroke="#444" stroke-width="1.600"/></svg></button>
        <button aria-label="Эффекты"><svg viewBox="0 0 24 24"><ellipse cx="11" cy="22.500" rx="9" ry="1.300" fill="#d0d0d2"/><path d="M17 3h6M18 7h6M19 12h5M18 16h5" stroke="#e5bc60"/><path d="M11 1l3.300 7.200 7.700.8-5.700 5.300 1.600 7.700L11 18.200 4.100 22l1.600-7.700L0 9l7.700-.8z" fill="url(#gold)" stroke="#cf8f14" stroke-width="1.200"/></svg></button>
        <button aria-label="Смена слайда"><svg viewBox="0 0 24 24"><ellipse cx="12" cy="22" rx="10" ry="1.500" fill="#d0d0d2"/><path d="M1.500 2.500h13v16h-13z" fill="#fff" stroke="#8a959e"/><path d="M3.500 6h6M3.500 9h4M3.500 14h3" stroke="#9ab"/><path d="M10.500 1.500h13v17h-13z" fill="#eaf4fc" stroke="#5387b5"/><path d="M13 5h8M13 8h8" stroke="#6b9cc8" stroke-width="1.500"/><path d="M13 17v-6h9v6z" fill="#7ebcf0"/><path d="M13 18l4-4 5 4z" fill="#6a7a28"/><circle cx="18" cy="13" r="1.500" fill="#f5c23a"/><path d="M5 11.500h5v-3l5.500 4.500-5.500 4.500v-3H5z" fill="#1f5f8f"/></svg></button>
        <button aria-label="Стили и форматирование"><svg><use href="#wrenchball"/></svg></button>
        <button aria-label="Галерея"><svg><use href="#gallery"/></svg></button>
        <button aria-label="Навигатор"><svg><use href="#compass"/></svg></button>
      </div>
    </aside>
  </main>

  <div role="toolbar" aria-label="Рисование" class="mt-px flex h-8 shrink-0 items-center border-y border-[#9c9c9e] bg-linear-to-b from-[#f4f4f5] to-[#eeeeef] [&>*]:shrink-0 [&>.dd]:w-[11px] [&>.grip]:w-[11px] [&>button]:grid [&>button]:h-[26px] [&>button]:w-[25px] [&>button]:place-items-center [&>hr]:mr-[3px] [&>hr]:ml-1 [&>hr]:h-[15px] [&>hr]:w-px [&>hr]:border-0 [&>hr]:bg-[#c6c6ca] [&_svg]:h-6 [&>button:not(.dd)>svg]:w-6">
    <svg class="grip"><use href="#grip"/></svg>
    <button aria-label="Выделение" aria-pressed="true" class="border border-[#8ab6de] bg-[#b3d5f6]"><svg viewBox="0 0 24 24"><path d="M8 5v12.500l3-2.800 2 4.800 2.500-1-2-4.700h4z" fill="#fff" stroke="#55606c" stroke-width="1.100"/></svg></button>
    <hr>
    <button aria-label="Линия"><svg viewBox="0 0 24 24"><path d="M5 19L19 5.500" stroke="#111" stroke-width="1.100"/></svg></button>
    <button aria-label="Линия со стрелкой"><svg viewBox="0 0 24 24"><path d="M6 12.500h8" stroke="#000" stroke-width="1.200"/><path d="M13 9.500v6l5.500-3z"/></svg></button>
    <button aria-label="Прямоугольник"><svg viewBox="0 0 24 24"><path d="M4.500 6.500h15v11h-15z" fill="url(#blue)" stroke="#33608f"/></svg></button>
    <button aria-label="Эллипс"><svg viewBox="0 0 24 24"><ellipse cx="12" cy="12" rx="7.500" ry="5.500" fill="url(#blue)" stroke="#33608f"/></svg></button>
    <button aria-label="Текст"><svg viewBox="0 0 24 24"><text x="12" y="19" text-anchor="middle" font-family="Liberation Serif" font-size="21" font-weight="700" fill="#4c4c4c" stroke="#4c4c4c" stroke-width=".6">T</text></svg></button>
    <hr>
    <button aria-label="Кривая"><svg viewBox="0 0 24 24"><path d="M8 19c3-3 5 1 7-1s3 0 4-2" fill="none" stroke="#3c6c9c" stroke-width="1.500"/><path d="M5 18.500l1.500-5 9-9 3.500 3-9 9.500z" fill="#e88a48" stroke="#9c4a1c"/><path d="M5 18.500l1.500-5 3 3z" fill="#f0d8b0" stroke="#6a4a30" stroke-width=".8"/><path d="M15.500 4.500l3.500 3" stroke="#c03020" stroke-width="2"/></svg></button>
    <button class="dd" aria-label="Кривая: варианты"><svg class="w-[11px]"><use href="#dd"/></svg></button>
    <button aria-label="Соединительная линия"><svg viewBox="0 0 24 24" fill="none" stroke="#111" stroke-width="1.200"><circle cx="6.500" cy="7" r="1.700"/><path d="M8.200 7H13v10h3"/><circle cx="17.500" cy="17" r="1.700"/></svg></button>
    <button class="dd" aria-label="Соединительная линия: варианты"><svg class="w-[11px]"><use href="#dd"/></svg></button>
    <button aria-label="Основные фигуры"><svg viewBox="0 0 24 24"><path d="M12 4.500l7.500 7.500-7.500 7.500L4.500 12z" fill="url(#blue)" stroke="#33608f"/></svg></button>
    <button class="dd" aria-label="Основные фигуры: варианты"><svg class="w-[11px]"><use href="#dd"/></svg></button>
    <button aria-label="Фигуры-символы"><svg viewBox="0 0 24 24"><circle cx="12" cy="12" r="7.500" fill="url(#blue)" stroke="#33608f"/><path d="M9.500 8v2.500M14.500 8v2.500M8 13.500c2 3.500 6 3.500 8 0" fill="none" stroke="#2b5585" stroke-width="1.300"/></svg></button>
    <button class="dd" aria-label="Фигуры-символы: варианты"><svg class="w-[11px]"><use href="#dd"/></svg></button>
    <button aria-label="Блочные стрелки"><svg viewBox="0 0 24 24"><path d="M4 12l5-4.500v3h6v-3l5 4.500-5 4.500v-3H9v3z" fill="url(#blue)" stroke="#33608f"/></svg></button>
    <button class="dd" aria-label="Блочные стрелки: варианты"><svg class="w-[11px]"><use href="#dd"/></svg></button>
    <button aria-label="Блок-схема"><svg viewBox="0 0 24 24"><path d="M4.500 4.500h15v15h-15z" fill="url(#blue)" stroke="#2c5888"/><path d="M8.500 4.500v15M4.500 8.500h15" stroke="#2c5888" stroke-width="1.300"/></svg></button>
    <button class="dd" aria-label="Блок-схема: варианты"><svg class="w-[11px]"><use href="#dd"/></svg></button>
    <button aria-label="Выноски"><svg viewBox="0 0 24 24"><path d="M6.500 5h11q2 0 2 2v5.500q0 2-2 2H12l-4.500 4.500v-4.500h-1q-2 0-2-2V7q0-2 2-2z" fill="url(#blue)" stroke="#33608f"/></svg></button>
    <button class="dd" aria-label="Выноски: варианты"><svg class="w-[11px]"><use href="#dd"/></svg></button>
    <button aria-label="Звёзды"><svg viewBox="0 0 24 24"><path d="M12 4.500l2.200 5 5.300.5-4 3.600 1.200 5.400L12 16.200 7.300 19l1.200-5.400-4-3.600 5.300-.5z" fill="url(#blue)" stroke="#33608f"/></svg></button>
    <button class="dd" aria-label="Звёзды: варианты"><svg class="w-[11px]"><use href="#dd"/></svg></button>
    <hr>
    <button aria-label="Точки"><svg viewBox="0 0 24 24"><path d="M6.500 7.500l11-2-1 9.500-6 3z" fill="none" stroke="#111" stroke-width="1.200"/><path d="M5.500 6.500h2v2h-2zM16.500 4.500h2v2h-2zM15.500 14h2v2h-2zM9.500 17h2v2h-2z" fill="#fff" stroke="#111"/></svg></button>
    <button aria-label="Точки соединения"><svg viewBox="0 0 24 24"><path d="M13 6l4-2 3 3-2 4-5 4-4-3z" fill="#b03a24" stroke="#3a2818"/><path d="M12 9l5 4-5 4-4-3z" fill="#b7a040" stroke="#3a2818"/><path d="M10 12l3 4-6 3.500z" fill="#4a4030"/></svg></button>
    <hr>
    <button aria-label="Текстовые эффекты"><svg viewBox="0 0 24 24"><path d="M9 5.500l3-1.500 3 1.500" fill="none" stroke="#9c6a18" stroke-width="1.500"/><path d="M5 6.500h14.500v12.500H5z" fill="#fff" stroke="#c28a2c" stroke-width="2.200"/><path d="M4 5.500h16.500v14.500H4z" fill="none" stroke="#86602a" stroke-width=".7"/><text x="12.200" y="16" text-anchor="middle" font-family="Liberation Sans" font-size="9" font-weight="700" fill="#a83030">A</text></svg></button>
    <button aria-label="Из файла"><svg viewBox="0 0 24 24"><path d="M4.500 5.500h15v13h-15z" fill="#fff" stroke="#8a7c66" stroke-width="1.300"/><path d="M6.500 7.500h11v9h-11z" fill="#70808c"/><path d="M6.500 16.500v-3c3-2 6 0 7 3z" fill="#e8b838"/><path d="M13.500 16.500v-4l-2.500-2M13.500 12.500l2.500-2.500" stroke="#3f2d12" fill="none" stroke-width="1.500"/></svg></button>
    <button aria-label="Галерея"><svg class="p-[3px]"><use href="#gallery"/></svg></button>
    <hr>
    <button aria-label="Экструзия"><svg viewBox="0 0 24 24"><rect x="7.500" y="5.500" width="12" height="12.500" rx="2" fill="#d2d2d4" stroke="#b2b2b4"/><path d="M4.500 13.500h6v5.500h-6z" fill="#e6e6e8" stroke="#aaa"/></svg></button>
  </div>

  <footer class="flex h-5 shrink-0 items-center [&>*]:shrink-0 [&>hr]:h-4 [&>hr]:w-px [&>hr]:border-0 [&>hr]:bg-[#a4a4a8]">
    <hr class="ml-[198px]">
    <svg class="ml-[10px] h-3 w-[14px]" viewBox="0 0 14 12"><path d="M3.500 3.500h10v7h-10z" fill="none" stroke="#1c2858" stroke-dasharray="1.500 1"/><path d="M0 3.500h7M3.500 0v7" stroke="#1c2858"/></svg>
    <span class="ml-[6px] w-[183px]">11,44 / 22,45</span>
    <svg class="h-3 w-[14px]" viewBox="0 0 14 12"><path d="M4.500 3.500h9v7h-9z" fill="none" stroke="#222" stroke-dasharray="1 1"/><path d="M1 4v7M0 4.500h3M0 10.500h3M5 0l2 2M7 0L5 2M11 0l2 2M13 0l-2 2" stroke="#222" stroke-dasharray="2 1"/></svg>
    <span class="ml-[6px] min-w-0 flex-1">0,00 x 0,00</span>
    <hr>
    <svg class="mx-[5px] h-3 w-[11px]" viewBox="0 0 11 12"><path d="M9.500 7v4.500h-9v-11h9V3" fill="none" stroke="#9c9ca0"/><path d="M3 6l2 3 5-5" fill="none" stroke="#9c9ca0" stroke-width="1.200"/></svg>
    <hr><hr class="ml-[28px]">
    <span class="w-[72px] pl-1 text-center">Слайд 1 / 1</span>
    <hr><span class="w-[67px] pl-1 text-center">Обычный</span><hr>
    <svg class="mx-[5px] size-3" viewBox="0 0 12 12"><path d="M6 1v10M1 6h10" stroke="#222" stroke-width="1.500"/><path d="M6 0l2.500 3h-5zM6 12l2.500-3h-5zM0 6l3-2.500v5zM12 6L9 3.500v5z" fill="#222"/></svg>
    <hr>
    <div class="flex w-10 items-center overflow-hidden">
      <button aria-label="Уменьшить масштаб" class="mr-[6px] ml-[10px] flex h-3 w-2 shrink-0 items-center"><span class="h-[2px] w-full bg-[#909094]"></span></button>
      <input type="range" aria-label="Масштаб" value="10" class="h-3 w-[100px] shrink-0 appearance-none bg-transparent [&::-webkit-slider-runnable-track]:h-[2px] [&::-webkit-slider-runnable-track]:bg-[#a0a0a4] [&::-webkit-slider-thumb]:-mt-[3px] [&::-webkit-slider-thumb]:size-2 [&::-webkit-slider-thumb]:appearance-none [&::-webkit-slider-thumb]:rounded-full [&::-webkit-slider-thumb]:border [&::-webkit-slider-thumb]:border-[#888] [&::-webkit-slider-thumb]:bg-white">
    </div>
  </footer>
</div>
</body>
</html>
